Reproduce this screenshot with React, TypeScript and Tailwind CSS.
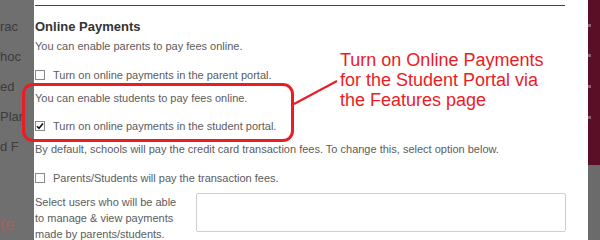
import React from 'react';

const Box = ({ checked = false }: { checked?: boolean }) => (
  <span className="w-[10px] h-[10px] border border-[#8a8a8a] bg-white flex items-center justify-center shrink-0">
    {checked && (
      <svg width="8" height="8" viewBox="0 0 8 8">
        <path d="M1 4.2 L3 6.3 L7 1.5" stroke="#111" strokeWidth="1.6" fill="none" />
      </svg>
    )}
  </span>
);

const CheckRow = ({ label, checked = false }: { label: string; checked?: boolean }) => (
  <div className="flex items-center gap-[8px] h-[16px]">
    <Box checked={checked} />
    <span>{label}</span>
  </div>
);

export default function App() {
  return (
    <div className="relative w-[600px] h-[240px] flex overflow-hidden bg-white font-['Liberation_Sans',Arial,sans-serif]">
      {/* Background page peeking out on the left */}
      <div className="w-[34px] shrink-0 bg-[#6f6f6f] text-[#3c3c3c] text-[13px] leading-[16px] flex flex-col overflow-hidden whitespace-nowrap">
        <span className="mt-[19px]">rac</span>
        <span className="mt-[14px]">hoc</span>
        <span className="mt-[14px]">ed</span>
        <span className="mt-[14px]">Plar</span>
        <span className="mt-[14px]">d F</span>
        <span className="mt-[62px] text-[16px] leading-[16px] text-[#a86060]">(e</span>
      </div>

      {/* Modal */}
      <div className="flex-1 pl-[1px] text-[11px] leading-[16px] text-[#5c5c5c]">
        <div className="mt-[5px] mr-[23px] border-t border-[#444]" />
        <h3 className="mt-[13px] text-[13px] leading-[16px] font-bold text-[#333]">Online Payments</h3>
        <p className="mt-[3px]">You can enable parents to pay fees online.</p>
        <div className="mt-[13px]">
          <CheckRow label="Turn on online payments in the parent portal." />
        </div>
        <p className="mt-[7px]">You can enable students to pay fees online.</p>
        <div className="mt-[12px]">
          <CheckRow label="Turn on online payments in the student portal." checked />
        </div>
        <p className="mt-[7px]">By default, schools will pay the credit card transaction fees. To change this, select option below.</p>
        <div className="mt-[13px]">
          <CheckRow label="Parents/Students will pay the transaction fees." />
        </div>
        <div className="mt-[8px] flex items-start">
          <p className="w-[150px]">Select users who will be able to manage &amp; view payments made by parents/students.</p>
          <div className="ml-[11px] -mt-[1px] w-[370px] h-[39px] border border-[#cfcfcf] rounded-[2px]" />
        </div>
      </div>

      {/* Right side of the page behind */}
      <div className="w-[12px] shrink-0 flex flex-col">
        <div className="h-[165px] bg-[#5b0f27] flex flex-col">
          <span className="mt-[24px] w-[3px] h-[3px] bg-[#8a6070]" />
          <span className="mt-[27px] w-[3px] h-[3px] bg-[#8a6070]" />
          <span className="mt-[28px] w-[3px] h-[3px] bg-[#8a6070]" />
          <span className="mt-[28px] w-[3px] h-[3px] bg-[#8a6070]" />
        </div>
        <div className="flex-1 bg-[#6b6b6b]" />
      </div>

      {/* Annotation overlay */}
      <div className="absolute left-[22px] top-[83px] w-[272px] h-[59px] border-[3px] border-[#ea1c24] rounded-[11px]" />
      <svg className="absolute left-0 top-0" width="600" height="240">
        <line x1="294" y1="104" x2="337" y2="81" stroke="#ea1c24" strokeWidth="2" />
      </svg>
      <div className="absolute left-[340px] top-[50px] text-[18px] leading-[20px] text-[#ea1c24]">
        Turn on Online Payments<br />for the Student Portal via<br />the Features page
      </div>
    </div>
  );
}
